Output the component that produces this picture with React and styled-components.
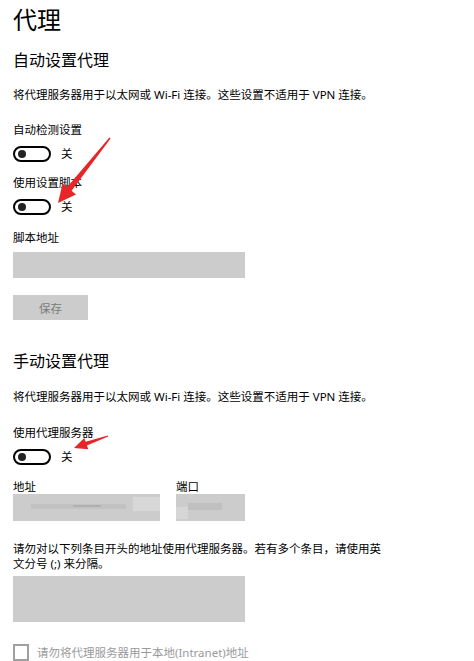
import React from 'react';
import styled, { createGlobalStyle } from 'styled-components';

const FONT = '"Noto Sans", "Noto Sans CJK SC", sans-serif';
const FIELD = '#cccccc';

const GlobalStyle = createGlobalStyle`
  html, body {
    margin: 0;
    padding: 0;
    background: #ffffff;
  }
  body {
    font-family: ${FONT};
    color: #000000;
  }
`;

const Page = styled.div`
  position: relative;
  width: 474px;
  height: 661px;
  overflow: hidden;
  box-sizing: border-box;
  padding: 4px 0 0 13px;
  display: flex;
  flex-direction: column;
  align-items: flex-start;
`;

const Title = styled.h1`
  margin: 0;
  font-size: 24px;
  line-height: 32px;
  font-weight: 400;
`;

const Heading = styled.h2`
  margin: ${(p) => p.top}px 0 0;
  font-size: 16px;
  line-height: 24px;
  font-weight: 400;
`;

const Text = styled.p`
  margin: ${(p) => p.top || 0}px 0 0;
  font-size: 11.5px;
  line-height: ${(p) => p.lh || 16}px;
  color: ${(p) => (p.muted ? '#9a9a9a' : '#000000')};
`;

const ToggleRow = styled.div`
  display: flex;
  align-items: center;
  gap: 10px;
  margin-top: 8px;
  font-size: 11.5px;
  line-height: 16px;
`;

const Track = styled.span`
  box-sizing: border-box;
  width: 38px;
  height: 16px;
  border: 2px solid #000000;
  border-radius: 8px;
  display: flex;
  align-items: center;
  padding-left: 3px;
`;

const Knob = styled.span`
  width: 8px;
  height: 8px;
  border-radius: 50%;
  background: #222222;
`;

const Field = styled.div`
  margin-top: ${(p) => p.top || 0}px;
  width: ${(p) => p.w}px;
  height: ${(p) => p.h}px;
  background: ${FIELD};
  position: relative;
`;

const Smudge = styled.span`
  position: absolute;
  left: ${(p) => p.l}px;
  top: ${(p) => p.t}px;
  width: ${(p) => p.w}px;
  height: ${(p) => p.h}px;
  background: ${(p) => p.c};
`;

const Button = styled.div`
  margin-top: 17px;
  width: 75px;
  height: 25px;
  background: ${FIELD};
  color: #7a7a7a;
  font-size: 11.5px;
  display: flex;
  align-items: center;
  justify-content: center;
`;

const Pair = styled.div`
  margin-top: 15px;
  display: flex;
  gap: 16px;
`;

const Col = styled.div`
  display: flex;
  flex-direction: column;
`;

const FieldLabel = styled.span`
  font-size: 11.5px;
  line-height: 14px;
`;

const CheckRow = styled.div`
  margin-top: 22px;
  display: flex;
  align-items: center;
  gap: 8px;
  font-size: 11.5px;
  line-height: 17px;
  color: #9a9a9a;
`;

const Box = styled.span`
  box-sizing: border-box;
  width: 16px;
  height: 17px;
  border: 2px solid #a0a0a0;
`;

const Overlay = styled.svg`
  position: absolute;
  left: 0;
  top: 0;
  pointer-events: none;
`;

const Toggle = () => (
  <ToggleRow>
    <Track>
      <Knob />
    </Track>
    关
  </ToggleRow>
);

const App = () => (
  <>
    <GlobalStyle />
    <Page>
      <Title>代理</Title>
      <Heading top={12}>自动设置代理</Heading>
      <Text top={15}>将代理服务器用于以太网或 Wi-Fi 连接。这些设置不适用于 VPN 连接。</Text>

      <Text top={19}>自动检测设置</Text>
      <Toggle />
      <Text top={13}>使用设置脚本</Text>
      <Toggle />

      <Text top={15}>脚本地址</Text>
      <Field top={6} w={232} h={26} />
      <Button>保存</Button>

      <Heading top={29}>手动设置代理</Heading>
      <Text top={16}>将代理服务器用于以太网或 Wi-Fi 连接。这些设置不适用于 VPN 连接。</Text>
      <Text top={20}>使用代理服务器</Text>
      <Toggle />

      <Pair>
        <Col>
          <FieldLabel>地址</FieldLabel>
          <Field w={147} h={27}>
            <Smudge l={18} t={10} w={95} h={5} c="#c2c2c2" />
            <Smudge l={60} t={11} w={28} h={2} c="#b0b0b0" />
            <Smudge l={120} t={3} w={27} h={14} c="#d8d8d8" />
          </Field>
        </Col>
        <Col>
          <FieldLabel>端口</FieldLabel>
          <Field w={69} h={27}>
            <Smudge l={12} t={9} w={34} h={7} c="#c0c0c0" />
            <Smudge l={0} t={13} w={12} h={12} c="#d6d6d6" />
          </Field>
        </Col>
      </Pair>

      <Text top={20} lh={15}>
        请勿对以下列条目开头的地址使用代理服务器。若有多个条目，请使用英
        <br />
        文分号 (;) 来分隔。
      </Text>
      <Field top={5} w={232} h={46} />

      <CheckRow>
        <Box />
        请勿将代理服务器用于本地(Intranet)地址
      </CheckRow>

      <Overlay width="474" height="661" viewBox="0 0 474 661">
        <polygon
          fill="#e8262a"
          points="110.6,138.5 71.6,190.8 76,194.4 58,203 62.6,183.6 67,187.2 109.4,137.5"
        />
        <polygon
          fill="#e8262a"
          points="108.2,436.6 86.9,445.6 88.3,449.3 74,448 84.3,438 85.6,441.8 107.8,435.4"
        />
      </Overlay>
    </Page>
  </>
);

export default App;
